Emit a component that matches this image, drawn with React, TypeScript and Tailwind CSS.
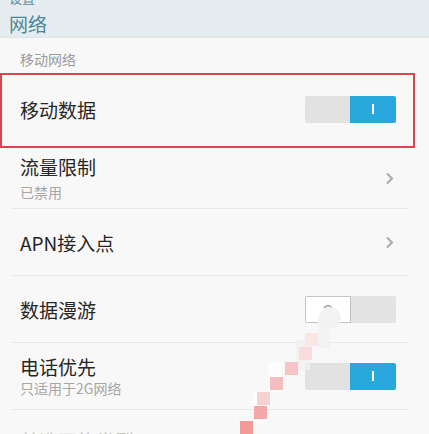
import React from "react";

const font = { fontFamily: '"Noto Sans CJK SC", "Noto Sans", sans-serif' };

function Chevron() {
  return (
    <svg width="9" height="13" viewBox="0 0 9 13" className="shrink-0">
      <polyline points="2,1.5 7,6.5 2,11.5" fill="none" stroke="#a8a8a8" strokeWidth="2" />
    </svg>
  );
}

function SwitchOn() {
  return (
    <div className="flex h-[27px] w-[91px] shrink-0 overflow-hidden rounded-[2px]">
      <div className="w-[45px] bg-[#e2e2e2]" />
      <div className="flex flex-1 items-center justify-center bg-[#29a8de]">
        <div className="h-[10px] w-[2px] bg-white" />
      </div>
    </div>
  );
}

function SwitchOff() {
  return (
    <div className="flex h-[27px] w-[91px] shrink-0 overflow-hidden rounded-[2px]">
      <div className="flex w-[46px] items-start justify-center border border-[#c4c4c4] bg-white pt-[6px]">
        <svg width="12" height="6" viewBox="0 0 12 6">
          <path d="M2 5 Q6 0 10 5" fill="none" stroke="#9a9a9a" strokeWidth="1.5" />
        </svg>
      </div>
      <div className="flex-1 bg-[#e3e3e3]" />
    </div>
  );
}

function Divider() {
  return <div className="ml-[12px] mr-[21px] h-px bg-[#e9e9e9]" />;
}

function Watermark() {
  const squares: [number, number, string][] = [
    [240, 421, "#f09a9a"],
    [254, 406, "#f2a8a8"],
    [257, 392, "#f8d2d2"],
    [270, 377, "#f5bebe"],
    [285, 362, "#f6c4c4"],
    [299, 347, "#fadcdc"],
    [305, 333, "#fbe6e6"],
  ];
  return (
    <svg className="pointer-events-none absolute left-0 top-0" width="429" height="434">
      <rect x="253" y="392" width="14" height="30" fill="#ffffff" opacity="0.7" />
      <rect x="268" y="362" width="14" height="30" fill="#ffffff" opacity="0.7" />
      <rect x="296" y="340" width="14" height="30" fill="#f0f0f0" opacity="0.8" />
      {squares.map(([x, y, c], i) => (
        <rect key={i} x={x} y={y} width="13" height="13" fill={c} />
      ))}
      <circle cx="330" cy="318" r="11" fill="#f2f2f2" opacity="0.95" />
      <rect x="318" y="318" width="12" height="30" fill="#f2f2f2" opacity="0.9" />
    </svg>
  );
}

export default function App() {
  return (
    <div className="relative h-[434px] w-[429px] overflow-hidden bg-[#f8f8f8]" style={font}>
      {/* Header */}
      <div className="h-[38px] overflow-hidden border-b border-[#dfe6e9] bg-[#e5ecef] pl-[9px]">
        <div className="-mt-[9px] text-[13px] leading-[13px] text-[#5d8d9b]">设置</div>
        <div className="mt-[10px] text-[19px] leading-[19px] text-[#4f8797]">网络</div>
      </div>

      {/* Section label */}
      <div className="h-[35px] pl-[20px] pt-[14px] text-[14px] leading-[14px] text-[#9c9c9c]">移动网络</div>

      {/* Mobile data row (highlighted) */}
      <div className="flex h-[75px] w-[415px] items-center justify-between border-2 border-[#d6474e] pb-[3px] pl-[18px] pr-[17px]">
        <span className="text-[19px] leading-[19px] text-[#262626]">移动数据</span>
        <SwitchOn />
      </div>

      {/* Data limit */}
      <div className="flex h-[60px] items-center justify-between pl-[20px] pr-[35px]">
        <div className="flex flex-col">
          <span className="text-[19px] leading-[19px] text-[#262626]">流量限制</span>
          <span className="mt-[9px] text-[14px] leading-[14px] text-[#a6a6a6]">已禁用</span>
        </div>
        <Chevron />
      </div>
      <Divider />

      {/* APN */}
      <div className="flex h-[66px] items-center justify-between pl-[20px] pr-[35px]">
        <span className="text-[19px] leading-[19px] text-[#262626]">APN接入点</span>
        <Chevron />
      </div>
      <Divider />

      {/* Roaming */}
      <div className="flex h-[66px] items-center justify-between pl-[20px] pr-[33px]">
        <span className="text-[19px] leading-[19px] text-[#262626]">数据漫游</span>
        <SwitchOff />
      </div>
      <Divider />

      {/* Call priority */}
      <div className="flex h-[66px] items-center justify-between pl-[20px] pr-[33px]">
        <div className="flex flex-col">
          <span className="text-[19px] leading-[19px] text-[#262626]">电话优先</span>
          <span className="mt-[5px] text-[14px] leading-[14px] text-[#a6a6a6]">只适用于2G网络</span>
        </div>
        <SwitchOn />
      </div>
      <Divider />

      <div className="pl-[20px] pt-[21px] text-[19px] leading-[19px] text-[#c4c4c4]">首选网络类型</div>

      <Watermark />
    </div>
  );
}
